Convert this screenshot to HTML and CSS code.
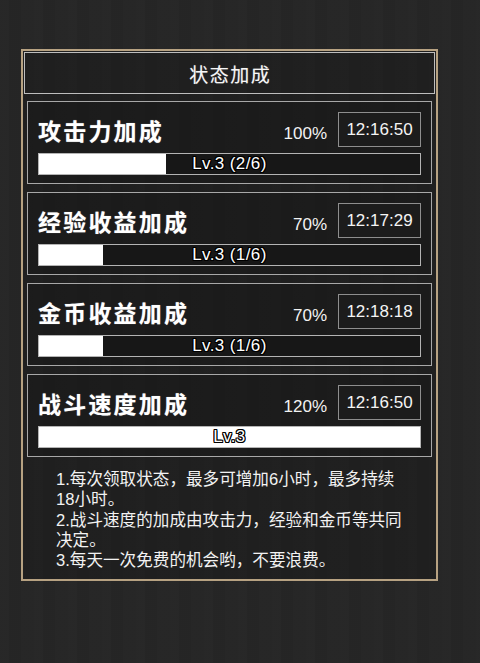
FILE: index.html
```html
<!DOCTYPE html>
<html lang="zh-CN">
<head>
<meta charset="utf-8">
<title>状态加成</title>
<link rel="stylesheet" href="styles.css">
</head>
<body>
<div class="frame">
  <div class="header">状态加成</div>
  <div class="cards">
    <div class="card">
      <div class="row">
        <div class="name">攻击力加成</div>
        <div class="pct">100%</div>
        <div class="time">12:16:50</div>
      </div>
      <div class="bar"><div class="fill" style="width:33.4%"></div><div class="label">Lv.3 (2/6)</div></div>
    </div>
    <div class="card">
      <div class="row">
        <div class="name">经验收益加成</div>
        <div class="pct">70%</div>
        <div class="time">12:17:29</div>
      </div>
      <div class="bar"><div class="fill" style="width:16.7%"></div><div class="label">Lv.3 (1/6)</div></div>
    </div>
    <div class="card">
      <div class="row">
        <div class="name">金币收益加成</div>
        <div class="pct">70%</div>
        <div class="time">12:18:18</div>
      </div>
      <div class="bar"><div class="fill" style="width:16.7%"></div><div class="label">Lv.3 (1/6)</div></div>
    </div>
    <div class="card">
      <div class="row">
        <div class="name">战斗速度加成</div>
        <div class="pct">120%</div>
        <div class="time">12:16:50</div>
      </div>
      <div class="bar"><div class="fill" style="width:100%"></div><div class="label">Lv.3</div></div>
    </div>
  </div>
  <div class="notes">
    <p>1.每次领取状态，最多可增加6小时，最多持续18小时。</p>
    <p>2.战斗速度的加成由攻击力，经验和金币等共同决定。</p>
    <p>3.每天一次免费的机会哟，不要浪费。</p>
  </div>
</div>
</body>
</html>
```
FILE: styles.css
```css
html, body {
  margin: 0;
  padding: 0;
}
body {
  width: 480px;
  height: 663px;
  background-color: #262626;
  background-image: repeating-linear-gradient(90deg,
    rgba(255,255,255,0.008) 0px, rgba(255,255,255,0.008) 9px,
    rgba(0,0,0,0.02) 9px, rgba(0,0,0,0.02) 21px,
    rgba(255,255,255,0.005) 21px, rgba(255,255,255,0.005) 34px);
  font-family: "Liberation Sans", "Noto Sans CJK SC", sans-serif;
  color: #fff;
  overflow: hidden;
  padding-top: 49px;
  box-sizing: border-box;
}
.frame {
  margin-left: 21px;
  width: 417px;
  box-sizing: border-box;
  border: 2px solid #b7a282;
  padding: 1px;
  background: rgba(20,20,20,0.35);
}
.header {
  height: 42px;
  box-sizing: border-box;
  border: 1px solid #bdbdbd;
  display: flex;
  align-items: center;
  justify-content: center;
  font-family: "Noto Sans CJK SC", sans-serif;
  font-size: 19px;
  letter-spacing: 1.5px;
  padding-left: 1.5px;
  color: #f6f6f6;
  text-shadow: 0 0 1px rgba(255,255,255,0.4);
}
.cards {
  display: flex;
  flex-direction: column;
  gap: 8px;
  margin: 7px 3px 0 3px;
}
.card {
  height: 83px;
  box-sizing: border-box;
  border: 1px solid #a8a8a8;
  padding: 10px 10px 0 10px;
  display: flex;
  flex-direction: column;
  gap: 6px;
  background: rgba(16,16,16,0.25);
}
.row {
  display: flex;
  align-items: center;
  height: 35px;
}
.name {
  flex: 1;
  font-family: "Noto Sans CJK SC", sans-serif;
  font-weight: 700;
  font-size: 23px;
  line-height: 23px;
  letter-spacing: 2.2px;
  margin-top: 1px;
  text-shadow: 0 0 1px rgba(255,255,255,0.5);
}
.pct {
  align-self: flex-end;
  font-size: 17px;
  line-height: 17px;
  margin-bottom: 5px;
  margin-right: 11px;
  color: #f2f2f2;
}
.time {
  width: 83px;
  height: 35px;
  box-sizing: border-box;
  border: 1px solid #8e8e8e;
  display: flex;
  align-items: center;
  justify-content: center;
  font-size: 17px;
  color: #f4f4f4;
  background: #1c1c1c;
}
.bar {
  height: 22px;
  box-sizing: border-box;
  border: 1px solid #b4b4b4;
  background: #171717;
  display: grid;
}
.fill {
  grid-area: 1 / 1;
  background: #ffffff;
  justify-self: start;
}
.label {
  grid-area: 1 / 1;
  text-align: center;
  font-size: 17px;
  line-height: 20px;
  letter-spacing: 0.4px;
  color: #fff;
  text-shadow: 1px 0 0 #000, -1px 0 0 #000, 0 1px 0 #000, 0 -1px 0 #000,
    1px 1px 0 #000, -1px -1px 0 #000, 1px -1px 0 #000, -1px 1px 0 #000;
}
.notes {
  margin-top: 13px;
  padding: 0 28px 7px 32px;
  font-size: 16.6px;
  line-height: 20.3px;
  color: #f2f2f2;
}
.notes p {
  margin: 0;
}
```
